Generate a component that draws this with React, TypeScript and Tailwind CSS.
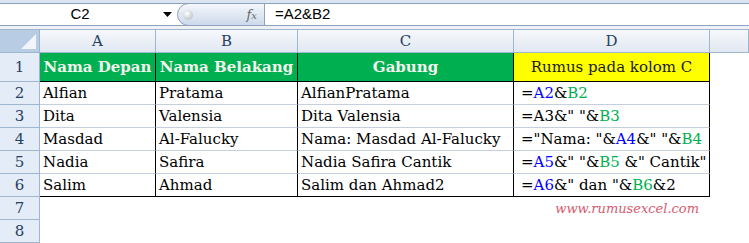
import React from "react";

type Seg = [string, "k" | "b" | "g"];

const SEG_COLOR = { k: "text-black", b: "text-[#0000ff]", g: "text-[#00b050]" };

const ROWS: { n: number; a: string; b: string; c: string; d: Seg[] }[] = [
  { n: 2, a: "Alfian", b: "Pratama", c: "AlfianPratama", d: [["=", "k"], ["A2", "b"], ["&", "k"], ["B2", "g"]] },
  { n: 3, a: "Dita", b: "Valensia", c: "Dita Valensia", d: [['=A3&" "&', "k"], ["B3", "g"]] },
  {
    n: 4,
    a: "Masdad",
    b: "Al-Falucky",
    c: "Nama: Masdad Al-Falucky",
    d: [['="Nama: "&', "k"], ["A4", "b"], ['&" "&', "k"], ["B4", "g"]],
  },
  {
    n: 5,
    a: "Nadia",
    b: "Safira",
    c: "Nadia Safira Cantik",
    d: [["=", "k"], ["A5", "b"], ['&" "&', "k"], ["B5", "g"], [' &" Cantik"', "k"]],
  },
  {
    n: 6,
    a: "Salim",
    b: "Ahmad",
    c: "Salim dan Ahmad2",
    d: [["=", "k"], ["A6", "b"], ['&" dan "&', "k"], ["B6", "g"], ["&2", "k"]],
  },
];

const serif = "font-['DejaVu_Serif',serif]";

function RowHead({ n, h }: { n: number; h: string }) {
  return (
    <div
      className={`w-[40px] shrink-0 ${h} flex items-center justify-center bg-[#e4ecf7] border-r border-b border-[#9eb6ce] text-[15px] text-[#27405f] ${serif}`}
    >
      {n}
    </div>
  );
}

export default function App() {
  return (
    <div className="w-[749px] h-[243px] overflow-hidden bg-white">
      {/* formula bar */}
      <div className="h-[3px] bg-[#dbe5f1]" />
      <div className="h-[23px] flex border-y border-[#8da2bd] bg-white">
        <div className="w-[177px] shrink-0 flex items-center font-['Liberation_Sans',sans-serif] text-[15px] text-black">
          <span className="w-[160px] text-center">C2</span>
          <svg width="9" height="5" viewBox="0 0 9 5" className="ml-[3px]">
            <path d="M0 0h9L4.5 5z" fill="#000" />
          </svg>
        </div>
        <div className="w-[88px] shrink-0 flex items-center rounded-l-full border border-[#8da2bd] bg-gradient-to-b from-[#f4f7fb] to-[#cdd9ea] -my-px">
          <div className="ml-[5px] w-[10px] h-[10px] rounded-full bg-[radial-gradient(circle_at_40%_35%,#ffffff,#a9b2bd)]" />
          <span className="ml-auto mr-[7px] font-['DejaVu_Serif',serif] italic text-[13px] text-[#666] leading-none">
            f<span className="text-[10px]">x</span>
          </span>
        </div>
        <div className="flex-1 flex items-center pl-[10px] font-['Liberation_Sans',sans-serif] text-[15px] text-black">
          =A2&amp;B2
        </div>
      </div>
      <div className="h-[3px] bg-[#eef2f8]" />

      {/* column headers */}
      <div className="flex h-[24px] border-t border-[#9eb6ce]">
        <div className="w-[40px] shrink-0 relative bg-[#b8cce4] border-r border-b border-[#9eb6ce]">
          <div className="absolute right-[3px] bottom-[3px] w-0 h-0 border-l-[15px] border-l-transparent border-b-[15px] border-b-[#f1f5fa]" />
        </div>
        {[
          ["A", "w-[116px]"],
          ["B", "w-[142px]"],
          ["C", "w-[216px]"],
          ["D", "w-[196px]"],
          ["", "flex-1"],
        ].map(([l, w]) => (
          <div
            key={l || "E"}
            className={`${w} shrink-0 flex items-center justify-center bg-gradient-to-b from-[#f6f8fb] to-[#e1e8f2] border-r border-b border-[#9eb6ce] text-[15px] text-[#27405f] ${serif}`}
          >
            {l}
          </div>
        ))}
      </div>

      {/* row 1 */}
      <div className="flex h-[29px]">
        <RowHead n={1} h="h-[29px]" />
        {[
          ["Nama Depan", "w-[116px]"],
          ["Nama Belakang", "w-[142px]"],
          ["Gabung", "w-[216px]"],
        ].map(([t, w]) => (
          <div
            key={t}
            className={`${w} shrink-0 flex items-center justify-center whitespace-nowrap bg-[#00b050] border-r border-b border-black font-bold text-[15px] text-[#f3f3ee] ${serif}`}
          >
            {t}
          </div>
        ))}
        <div
          className={`w-[196px] shrink-0 flex items-center justify-center bg-[#ffff00] border-r border-b border-black text-[15px] text-[#1a1a1a] ${serif}`}
        >
          Rumus pada kolom C
        </div>
      </div>

      {/* data rows */}
      {ROWS.map((r, i) => {
        const last = i === ROWS.length - 1;
        const bb = last ? "border-b-black" : "border-b-[#c5cfdd]";
        const cell = `shrink-0 flex items-center px-[3px] whitespace-pre border-b border-r border-r-black ${bb} text-[15px] text-black ${serif}`;
        return (
          <div key={r.n} className="flex h-[23px]">
            <RowHead n={r.n} h="h-[23px]" />
            <div className={`w-[116px] ${cell}`}>{r.a}</div>
            <div className={`w-[142px] ${cell}`}>{r.b}</div>
            <div className={`w-[216px] ${cell}`}>{r.c}</div>
            <div className={`w-[196px] ${cell} pl-[7px]`}>
              {r.d.map(([t, c], j) => (
                <span key={j} className={SEG_COLOR[c]}>
                  {t}
                </span>
              ))}
            </div>
          </div>
        );
      })}

      {/* rows 7 and 8 */}
      <div className="flex h-[23px]">
        <RowHead n={7} h="h-[23px]" />
        <div className="w-[474px] shrink-0" />
        <div className="w-[196px] shrink-0 flex items-center justify-end pr-[11px] font-['DejaVu_Serif',serif] italic text-[13px] text-[#d65a6e]">
          www.rumusexcel.com
        </div>
      </div>
      <div className="flex h-[23px]">
        <RowHead n={8} h="h-[23px]" />
      </div>
    </div>
  );
}
